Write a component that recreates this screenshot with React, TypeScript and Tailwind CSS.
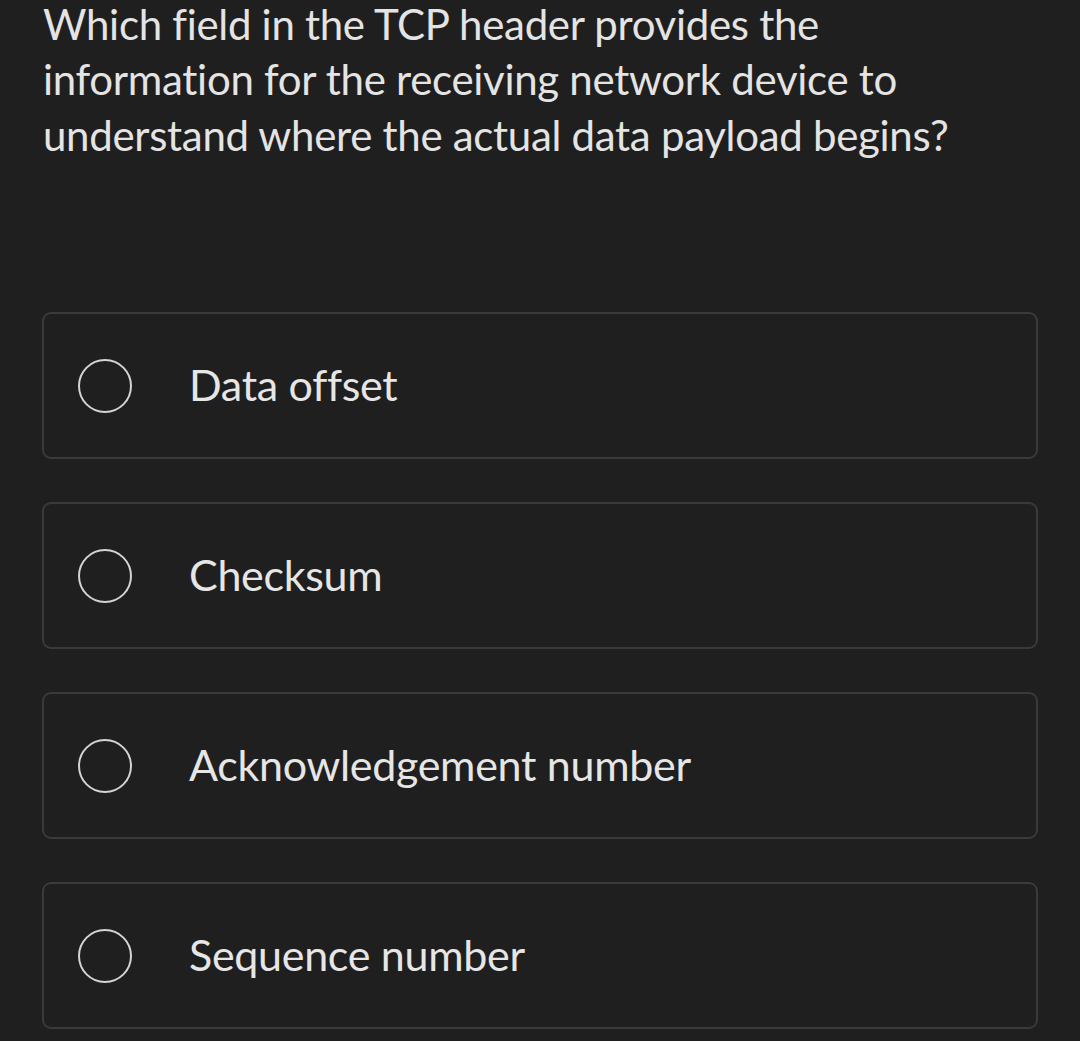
import React from "react";

const options = ["Data offset", "Checksum", "Acknowledgement number", "Sequence number"];

export default function App() {
  return (
    <div
      className="w-[1080px] h-[1041px] bg-[#1f1f1f] overflow-hidden text-[#e4e4e4]"
      style={{ fontFamily: "Lato, 'Noto Sans', sans-serif" }}
    >
      <div className="pl-[43px] pr-[40px] text-[42px] tracking-[-0.3px] whitespace-nowrap">
        <div className="h-[51px] leading-[49px]">Which field in the TCP header provides the</div>
        <div className="leading-[56px]">information for the receiving network device to</div>
        <div className="leading-[56px]">understand where the actual data payload begins?</div>
      </div>
      <div className="mt-[149px] ml-[42px] w-[996px] flex flex-col gap-[43px]">
        {options.map((o) => (
          <div
            key={o}
            className="h-[147px] border-2 border-[#3a3a3a] rounded-[9px] flex items-center pl-[34px]"
          >
            <div className="w-[54px] h-[54px] rounded-full border-2 border-[#d4d4d4] shrink-0" />
            <span className="ml-[57px] text-[43px] tracking-[-0.3px] text-[#e6e6e6]">{o}</span>
          </div>
        ))}
      </div>
    </div>
  );
}
